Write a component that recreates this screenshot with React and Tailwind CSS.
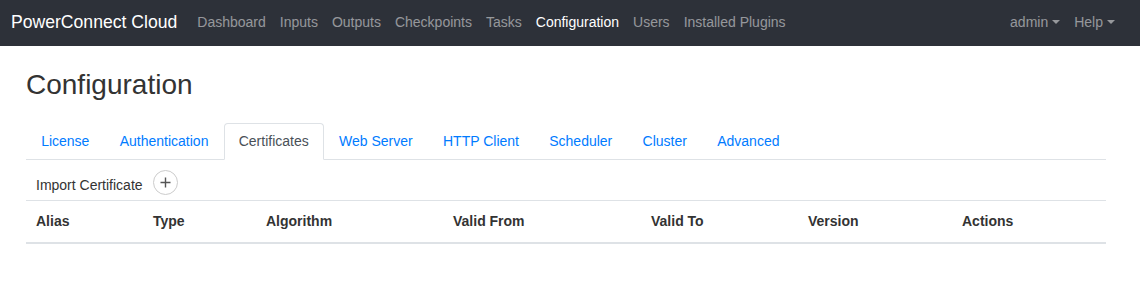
import React from "react";

const navLinks = ["Dashboard", "Inputs", "Outputs", "Checkpoints", "Tasks", "Configuration", "Users", "Installed Plugins"];
const tabs = ["License", "Authentication", "Certificates", "Web Server", "HTTP Client", "Scheduler", "Cluster", "Advanced"];
const columns = ["Alias", "Type", "Algorithm", "Valid From", "Valid To", "Version", "Actions"];

function Caret() {
	return <span className="ml-[4px] inline-block h-0 w-0 border-x-[4px] border-t-[4px] border-x-transparent border-t-current align-[3px]" />;
}

export default function App() {
	const active = "Certificates";

	return (
		<div className="min-h-screen bg-white font-['Liberation_Sans',Arial,sans-serif] text-[14px]">
			{/* Top navbar */}
			<nav className="flex h-[46px] items-center bg-[#2d3139] pl-[11px] pr-[18px] pb-px">
				<span className="mr-[13px] text-[17.6px] text-white">PowerConnect Cloud</span>
				<ul className="flex">
					{navLinks.map((link) => (
						<li
							key={link}
							className={`px-[7px] ${link === "Configuration" ? "text-white" : "text-white/50"}`}>
							{link}
						</li>
					))}
				</ul>
				<ul className="ml-auto flex text-white/50">
					<li className="px-[7px]">
						admin
						<Caret />
					</li>
					<li className="px-[7px]">
						Help
						<Caret />
					</li>
				</ul>
			</nav>

			<div className="pl-[26px] pr-[34px]">
				<h1 className="mt-[22px] text-[28px] leading-[1.2] text-[#333]">Configuration</h1>

				{/* Tabs */}
				<ul className="mt-[21px] flex border-b border-[#dee2e6]">
					{tabs.map((tab) => (
						<li
							key={tab}
							className={`-mb-px rounded-t-[4px] border px-[14.15px] py-2 leading-[19px] ${
								tab === active ? "border-[#dee2e6] border-b-white bg-white text-[#495057]" : "border-transparent text-[#007bff]"
							}`}>
							{tab}
						</li>
					))}
				</ul>

				{/* Import row */}
				<div className="flex h-[40px] items-end gap-[10px] pb-[5px] pl-[10px]">
					<span className="text-[14px] leading-[19px] text-[#333]">Import Certificate</span>
					<button className="flex h-[25px] w-[25px] items-center justify-center rounded-full border border-[#ccc] bg-white">
						<svg
							width="11"
							height="11"
							viewBox="0 0 11 11">
							<path
								d="M5.5 0.5v10M0.5 5.5h10"
								stroke="#555"
								strokeWidth="1.4"
							/>
						</svg>
					</button>
				</div>

				{/* Certificates table */}
				<div className="grid h-[44px] grid-cols-[117px_113px_187px_198px_157px_154px_1fr] items-center border-t border-b-2 border-[#dee2e6] font-bold text-[#333]">
					{columns.map((col) => (
						<div
							key={col}
							className="px-[10px]">
							{col}
						</div>
					))}
				</div>
			</div>
		</div>
	);
}
